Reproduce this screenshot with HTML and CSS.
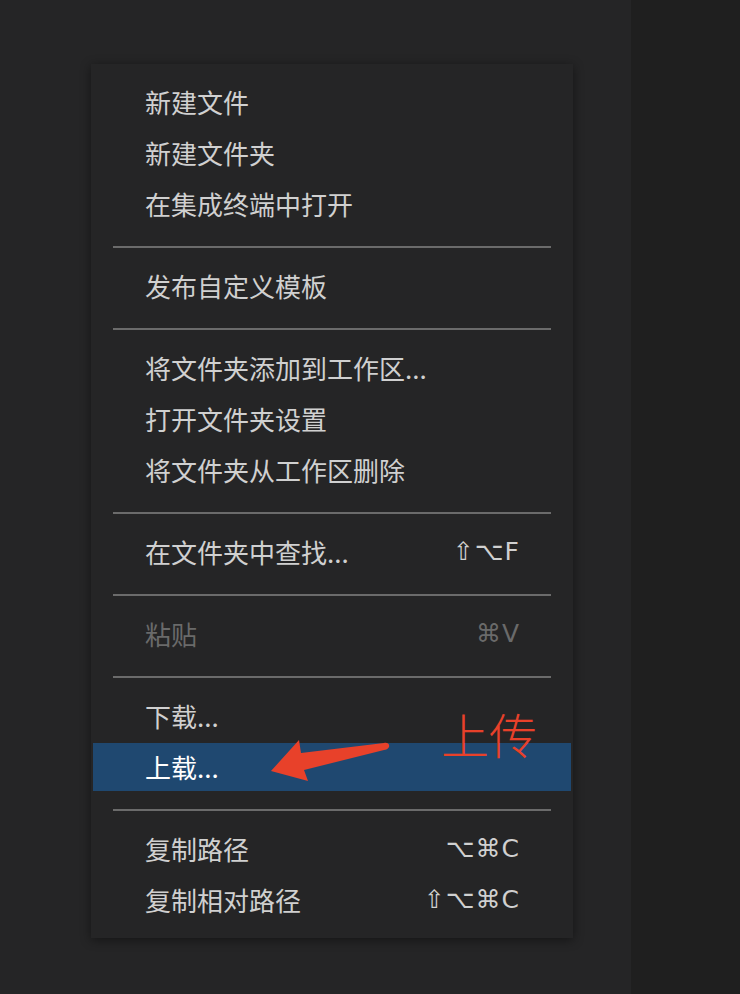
FILE: index.html
```html
<!DOCTYPE html>
<html lang="zh-CN">
<head>
<meta charset="utf-8">
<title>Context menu</title>
<link rel="stylesheet" href="styles.css">
</head>
<body>
<div class="page">
  <div class="sidebar">
    <div class="menu">
      <div class="item"><span class="label">新建文件</span></div>
      <div class="item"><span class="label">新建文件夹</span></div>
      <div class="item"><span class="label">在集成终端中打开</span></div>
      <div class="sep"></div>
      <div class="item"><span class="label">发布自定义模板</span></div>
      <div class="sep"></div>
      <div class="item"><span class="label">将文件夹添加到工作区...</span></div>
      <div class="item"><span class="label">打开文件夹设置</span></div>
      <div class="item"><span class="label">将文件夹从工作区删除</span></div>
      <div class="sep"></div>
      <div class="item"><span class="label">在文件夹中查找...</span><span class="key">⇧⌥F</span></div>
      <div class="sep"></div>
      <div class="item disabled"><span class="label">粘贴</span><span class="key">⌘V</span></div>
      <div class="sep"></div>
      <div class="item"><span class="label">下载...</span></div>
      <div class="item active"><span class="label">上载...</span>
        <span class="note">上传</span>
        <svg class="arrow" width="130" height="50" viewBox="0 0 130 50">
          <path d="M116 4 C119 3 122 5 121 8 C120 10 118 11 116 11 L36 31 L40 42 L3 32 L31 1 L33 14 Z" fill="#e8412a"/>
        </svg>
      </div>
      <div class="sep"></div>
      <div class="item"><span class="label">复制路径</span><span class="key">⌥⌘C</span></div>
      <div class="item"><span class="label">复制相对路径</span><span class="key">⇧⌥⌘C</span></div>
    </div>
  </div>
  <div class="editor"></div>
</div>
</body>
</html>
```

FILE: styles.css
```css
html, body {
  margin: 0;
  padding: 0;
  background: #252526;
}
.page {
  display: flex;
  width: 740px;
  height: 994px;
  overflow: hidden;
}
.sidebar {
  width: 631px;
  flex: none;
  background: #252526;
  padding: 64px 0 0 91px;
  box-sizing: border-box;
}
.editor {
  flex: 1;
  background: #1f1f1f;
}
.menu {
  display: flex;
  flex-direction: column;
  width: 482px;
  height: 874px;
  box-sizing: border-box;
  padding: 14px 2px 0 2px;
  background: #252526;
  box-shadow: 0 2px 10px rgba(0, 0, 0, 0.45);
  font-family: "Noto Sans CJK SC", "Noto Sans", sans-serif;
  font-size: 26px;
  color: #d0d0d0;
}
.item {
  position: relative;
  flex: none;
  height: 48px;
  margin-bottom: 3px;
  display: flex;
  align-items: center;
  justify-content: space-between;
  padding: 0 52px;
  line-height: 48px;
}
.item .label {
  white-space: nowrap;
}
.item .key {
  font-family: "DejaVu Sans", "Liberation Sans", sans-serif;
  font-size: 25px;
  letter-spacing: 1px;
  margin-right: -1px;
}
.item.disabled {
  color: #6a6a6a;
}
.item.active {
  background: #1f4870;
  color: #ffffff;
}
.sep {
  flex: none;
  height: 2px;
  margin: 15px 20px 14px 20px;
  background: #6b6b6b;
}
.note {
  position: absolute;
  left: 348px;
  top: -35px;
  font-size: 48px;
  line-height: 50px;
  color: #e8412a;
  font-weight: 300;
}
.arrow {
  position: absolute;
  left: 175px;
  top: -4px;
}
```
